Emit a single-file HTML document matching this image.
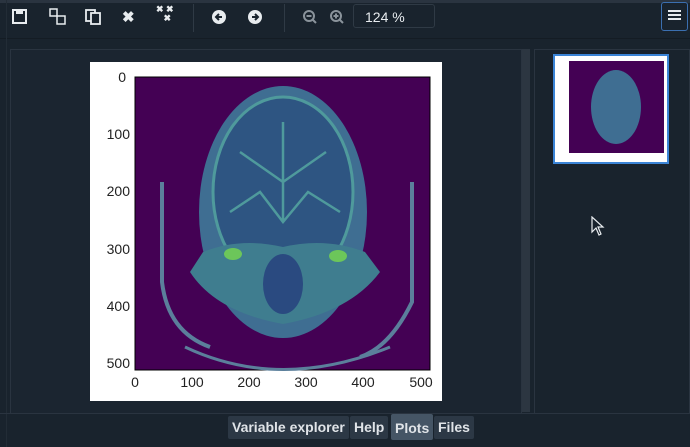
<!DOCTYPE html>
<html><head><style>
body{margin:0;width:690px;height:447px;background:#19232d;font-family:"Liberation Sans",sans-serif;overflow:hidden;position:relative}
.ic{position:absolute;color:#e8ecef;font-size:15px;font-weight:bold;top:8px}
.sep{position:absolute;top:4px;width:1px;height:28px;background:#2f3a45}
.tab{position:absolute;top:416px;height:23px;background:#2c3845;color:#e0e4e8;font-size:14px;font-weight:bold;line-height:23px;padding:0 4px;border-radius:2px}
</style></head><body>
<div style="position:absolute;left:0;top:0;width:690px;height:3px;background:#2a3440"></div>
<svg style="position:absolute;left:12px;top:9px" width="16" height="16"><rect x="1" y="1" width="13" height="13" fill="none" stroke="#e8ecef" stroke-width="2"/><rect x="4" y="1" width="7" height="4" fill="#e8ecef"/></svg>
<svg style="position:absolute;left:49px;top:8px" width="18" height="18"><rect x="1" y="1" width="7" height="7" fill="none" stroke="#e8ecef" stroke-width="1.5"/><rect x="8" y="8" width="8" height="8" fill="none" stroke="#e8ecef" stroke-width="1.5"/></svg>
<svg style="position:absolute;left:85px;top:8px" width="18" height="18"><rect x="1" y="2" width="9" height="11" fill="none" stroke="#e8ecef" stroke-width="1.8"/><rect x="6" y="5" width="9" height="11" fill="#19232d" stroke="#e8ecef" stroke-width="1.8"/></svg>
<div class="ic" style="left:122px">✖</div>
<div style="position:absolute;left:156px;top:5px;color:#e8ecef;font-size:9px;line-height:9px;font-weight:bold">✖&nbsp;✖<br>&nbsp;&nbsp;&nbsp;✖</div>
<div class="sep" style="left:193px"></div>
<svg style="position:absolute;left:211px;top:9px" width="16" height="16"><circle cx="8" cy="8" r="7" fill="#e8ecef"/><path d="M11 8H5M8 5L5 8L8 11" stroke="#19232d" stroke-width="2" fill="none"/></svg>
<svg style="position:absolute;left:247px;top:9px" width="16" height="16"><circle cx="8" cy="8" r="7" fill="#e8ecef"/><path d="M5 8H11M8 5L11 8L8 11" stroke="#19232d" stroke-width="2" fill="none"/></svg>
<div class="sep" style="left:284px"></div>
<svg style="position:absolute;left:302px;top:9px" width="16" height="16"><circle cx="7" cy="7" r="5" fill="none" stroke="#8a939b" stroke-width="2"/><path d="M10 10L14 14M4.5 7H9.5" stroke="#8a939b" stroke-width="2"/></svg>
<svg style="position:absolute;left:329px;top:9px" width="16" height="16"><circle cx="7" cy="7" r="5" fill="none" stroke="#8a939b" stroke-width="2"/><path d="M10 10L14 14M4.5 7H9.5M7 4.5V9.5" stroke="#8a939b" stroke-width="2"/></svg>
<div style="position:absolute;left:353px;top:4px;width:82px;height:24px;border:1px solid #2f3a45;border-radius:3px;color:#e8ecef;font-size:14px;line-height:24px;padding-left:11px;box-sizing:border-box">124 %</div>
<div style="position:absolute;left:661px;top:2px;width:27px;height:29px;border:1px solid #3b6fb0;border-radius:3px;box-sizing:border-box"></div>
<div style="position:absolute;left:668px;top:10px;width:13px;height:2px;background:#e8ecef;box-shadow:0 4px 0 #e8ecef,0 8px 0 #e8ecef"></div>
<div style="position:absolute;left:0;top:38px;width:690px;height:1px;background:#141c24"></div>
<div style="position:absolute;left:6px;top:0;width:1px;height:447px;background:#222c36"></div>
<div style="position:absolute;left:10px;top:49px;width:510px;height:363px;background:#1b2530;border:1px solid #2a3440"></div>
<div style="position:absolute;left:522px;top:49px;width:8px;height:363px;background:#2c3641"></div>
<div style="position:absolute;left:534px;top:49px;width:154px;height:363px;background:#19232d;border:1px solid #2a3440"></div>
<svg style="position:absolute;left:90px;top:62px" width="352" height="339" viewBox="0 0 352 339">
<rect width="352" height="339" fill="#fff"/>
<rect x="45" y="15" width="295" height="293" fill="#440154" stroke="#000" stroke-width="1"/>
<path d="M72 120 V220 Q78 270 120 285 M322 120 V240 Q300 285 270 295" fill="none" stroke="#5b7f9b" stroke-width="4"/>
<path d="M95 285 Q190 330 300 285" fill="none" stroke="#5b7f9b" stroke-width="3"/>
<ellipse cx="193" cy="150" rx="84" ry="126" fill="#3f6e92"/>
<ellipse cx="193" cy="130" rx="70" ry="95" fill="#2e5582" stroke="#4f9a9c" stroke-width="3"/>
<path d="M113 190 Q150 175 193 185 Q236 175 275 190 L290 210 Q260 250 193 262 Q126 250 100 210Z" fill="#3f7d8f"/>
<ellipse cx="193" cy="222" rx="20" ry="30" fill="#2a4a80"/>
<ellipse cx="143" cy="192" rx="9" ry="6" fill="#6cc65a"/>
<ellipse cx="248" cy="194" rx="9" ry="6" fill="#6cc65a"/>
<path d="M140 150 L170 130 L193 160 L218 130 L250 150 M193 60 V160 M150 90 L193 120 L236 90" stroke="#4f9a9c" stroke-width="2.5" fill="none"/>
<g font-size="14" fill="#222" font-family="Liberation Sans">
<g text-anchor="end"><text x="36" y="20">0</text><text x="40" y="77">100</text><text x="40" y="134">200</text><text x="40" y="192">300</text><text x="40" y="249">400</text><text x="40" y="306">500</text></g>
<g text-anchor="middle"><text x="45" y="325">0</text><text x="102" y="325">100</text><text x="159" y="325">200</text><text x="216" y="325">300</text><text x="273" y="325">400</text><text x="331" y="325">500</text></g>
</g></svg>
<div style="position:absolute;left:553px;top:54px;width:116px;height:110px;border:2px solid #3b84d6;box-sizing:border-box;background:#fff">
<div style="position:absolute;left:14px;top:5px;width:95px;height:92px;background:#440154"></div>
<div style="position:absolute;left:36px;top:14px;width:50px;height:74px;border-radius:50%;background:#3f6e92"></div>
</div>
<svg style="position:absolute;left:591px;top:216px" width="14" height="20"><path d="M1 1V16L5 12L8 19L10 18L7 11H12Z" fill="#19232d" stroke="#e8ecef" stroke-width="1.2"/></svg>
<div style="position:absolute;left:0;top:413px;width:690px;height:1px;background:#2a3440"></div>
<div class="tab" style="left:228px">Variable explorer</div>
<div class="tab" style="left:350px">Help</div>
<div class="tab" style="left:391px;top:414px;height:26px;line-height:28px;background:#455565">Plots</div>
<div class="tab" style="left:434px">Files</div>
</body></html>
